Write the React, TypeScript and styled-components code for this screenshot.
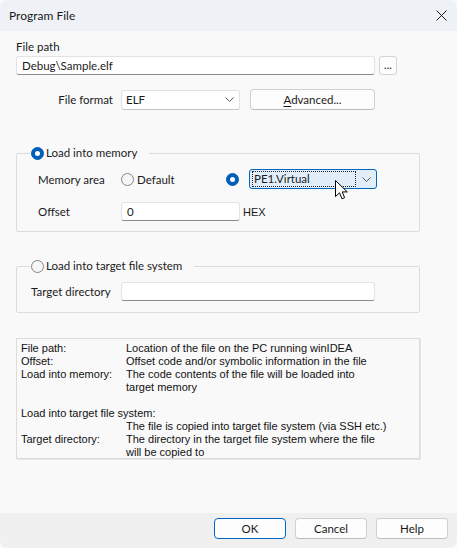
import React from 'react';
import styled, { createGlobalStyle } from 'styled-components';

const Global = createGlobalStyle`
  html, body { margin: 0; padding: 0; background: #f9f9f9; }
  body { font-family: 'Lato', 'Segoe UI', sans-serif; font-size: 11.5px; color: #1b1b1b; }
  * { box-sizing: border-box; }
`;

const Window = styled.div`
  width: 457px;
  height: 548px;
  display: flex;
  flex-direction: column;
  background: #f9f9f9;
  overflow: hidden;
  border-radius: 8px;
`;

const TitleBar = styled.div`
  height: 31px;
  flex: none;
  display: flex;
  align-items: center;
  justify-content: space-between;
  padding: 0 10px 0 9px;
  background: #eef2f6;
  font-size: 12px;
  color: #1a1a1a;
`;

const Body = styled.div`
  flex: 1;
  display: flex;
  flex-direction: column;
  padding: 8px 37px 0 16px;
`;

const TopLabel = styled.div`
  line-height: 16px;
  margin-bottom: 1px;
`;

const Row = styled.div<{ $mt?: number; $pr?: number }>`
  display: flex;
  align-items: center;
  margin-top: ${p => p.$mt ?? 0}px;
  padding-right: ${p => p.$pr ?? 0}px;
`;

const Field = styled.div<{ $w?: number; $h?: number }>`
  ${p => (p.$w ? `width: ${p.$w}px; flex: none;` : 'flex: 1;')}
  height: ${p => p.$h ?? 19}px;
  background: #ffffff;
  border: 1px solid #e3e3e3;
  border-bottom-color: #8a8a8a;
  border-radius: 3px;
  display: flex;
  align-items: center;
  padding: 0 5px;
  line-height: 16px;
`;

const SmallButton = styled.div`
  width: 18px;
  height: 19px;
  margin-left: 4px;
  flex: none;
  background: #fdfdfd;
  border: 1px solid #d3d3d3;
  border-radius: 3px;
  display: flex;
  align-items: center;
  justify-content: center;
  font-size: 11px;
  padding-bottom: 2px;
`;

const RightLabel = styled.div<{ $w: number }>`
  width: ${p => p.$w}px;
  flex: none;
  text-align: right;
`;

const LeftLabel = styled.div<{ $w: number }>`
  width: ${p => p.$w}px;
  flex: none;
`;

const Combo = styled.div<{ $w: number; $ml?: number; $focus?: boolean }>`
  position: relative;
  width: ${p => p.$w}px;
  margin-left: ${p => p.$ml ?? 0}px;
  flex: none;
  height: 20px;
  background: ${p => (p.$focus ? '#e1eefa' : '#ffffff')};
  border: 1px solid ${p => (p.$focus ? '#0067c0' : '#e0e0e0')};
  ${p => (p.$focus ? '' : 'border-bottom-color: #c4c4c4;')}
  border-radius: 3px;
  display: flex;
  align-items: center;
  justify-content: space-between;
  padding: 0 5px 0 2px;
`;

const ComboValue = styled.span<{ $focus?: boolean }>`
  flex: 1;
  height: 16px;
  line-height: 14px;
  padding-left: 1px;
  margin-right: 6px;
  border: 1px dotted ${p => (p.$focus ? '#222' : 'transparent')};
`;

const PushButton = styled.div<{ $w: number; $ml?: number; $default?: boolean }>`
  width: ${p => p.$w}px;
  height: 21px;
  margin-left: ${p => p.$ml ?? 0}px;
  flex: none;
  background: #fdfdfd;
  border: 1px solid ${p => (p.$default ? '#0067c0' : '#d0d0d0')};
  border-bottom-color: ${p => (p.$default ? '#0067c0' : '#bcbcbc')};
  border-radius: 4px;
  display: flex;
  align-items: center;
  justify-content: center;
  color: #1a1a1a;
`;

const Group = styled.fieldset<{ $mt: number }>`
  margin: ${p => p.$mt}px 0 0 0;
  padding: 0;
  min-width: 0;
  border: 1px solid #dcdcdc;
  border-radius: 2px;
`;

const GroupContent = styled.div<{ $pl: number; $pt: number; $pb: number }>`
  padding: ${p => p.$pt}px 0 ${p => p.$pb}px ${p => p.$pl}px;
  display: flex;
  flex-direction: column;
  gap: 13px;
`;

const Legend = styled.legend`
  margin-left: 13px;
  padding: 0 12px 0 1px;
  line-height: 16px;
  display: flex;
  align-items: center;
  gap: 2px;
`;

const RadioWrap = styled.div<{ $w?: number }>`
  display: flex;
  align-items: center;
  gap: 3px;
  ${p => (p.$w ? `width: ${p.$w}px; flex: none;` : '')}
`;

const RadioCircle = styled.span<{ $on?: boolean }>`
  width: 13px;
  height: 13px;
  flex: none;
  border-radius: 50%;
  display: inline-flex;
  align-items: center;
  justify-content: center;
  background: ${p => (p.$on ? '#005fb8' : '#f6f6f6')};
  border: 1px solid ${p => (p.$on ? '#005fb8' : '#858585')};
  &::after {
    content: '';
    display: ${p => (p.$on ? 'block' : 'none')};
    width: 5px;
    height: 5px;
    border-radius: 50%;
    background: #ffffff;
  }
`;

const Suffix = styled.span`
  margin-left: 3px;
  font-family: 'Liberation Sans', Arial, sans-serif;
  font-size: 11px;
`;

const InfoBox = styled.div`
  margin-top: 25px;
  height: 121px;
  border: 1px solid #dcdcdc;
  box-shadow: 1px 1px 0 #e6e6e6;
  padding: 3px 4px 0 4px;
  display: grid;
  grid-template-columns: 105px 1fr;
  grid-auto-rows: 13px;
  font-family: 'Liberation Sans', Tahoma, sans-serif;
  font-size: 11px;
  line-height: 13px;
  color: #111;
  align-content: start;
`;

const InfoCell = styled.div<{ $span?: boolean }>`
  white-space: nowrap;
  ${p => (p.$span ? 'grid-column: 1 / span 2;' : '')}
`;

const Footer = styled.div`
  height: 35px;
  flex: none;
  background: #f0f0f0;
  display: flex;
  justify-content: flex-end;
  gap: 9px;
  padding: 5px 9px 0 0;
`;

const Underline = styled.span`
  text-decoration: underline;
  text-underline-offset: 2px;
`;

const Chevron = () => (
  <svg width="9" height="5" viewBox="0 0 9 5" style={{ flex: 'none' }}>
    <path d="M0.5 0.5 L4.5 4.5 L8.5 0.5" fill="none" stroke="#5a5a5a" strokeWidth="1" />
  </svg>
);

const CursorSvg = styled.svg`
  position: absolute;
  left: 85px;
  top: 10px;
  pointer-events: none;
`;

const Cursor = () => (
  <CursorSvg width="13" height="20" viewBox="0 0 13 20">
    <path
      d="M0.5 0.5 L0.5 16.5 L4.5 12.8 L7 18.8 L9.6 17.7 L7.2 11.9 L12.3 11.9 Z"
      fill="#ffffff"
      stroke="#000000"
      strokeWidth="1"
    />
  </CursorSvg>
);

const CloseIcon = () => (
  <svg width="11" height="11" viewBox="0 0 11 11">
    <path d="M0.5 0.5 L10.5 10.5 M10.5 0.5 L0.5 10.5" stroke="#1a1a1a" strokeWidth="1" />
  </svg>
);

const info: [string, string][] = [
  ['File path:', 'Location of the file on the PC running winIDEA'],
  ['Offset:', 'Offset code and/or symbolic information in the file'],
  ['Load into memory:', 'The code contents of the file will be loaded into'],
  ['', 'target memory'],
  ['', ''],
];

export default function App() {
  return (
    <>
      <Global />
      <Window>
        <TitleBar>
          <span>Program File</span>
          <CloseIcon />
        </TitleBar>
        <Body>
          <TopLabel>File path</TopLabel>
          <Row $pr={23}>
            <Field>Debug\Sample.elf</Field>
            <SmallButton>...</SmallButton>
          </Row>
          <Row $mt={14}>
            <RightLabel $w={97}>File format</RightLabel>
            <Combo $w={119} $ml={8}>
              <ComboValue>ELF</ComboValue>
              <Chevron />
            </Combo>
            <PushButton $w={125} $ml={10}>
              <span>
                <Underline>A</Underline>dvanced...
              </span>
            </PushButton>
          </Row>

          <Group $mt={35}>
            <Legend>
              <RadioCircle $on />
              <span>Load into memory</span>
            </Legend>
            <GroupContent $pl={21} $pt={8} $pb={10}>
              <Row>
                <LeftLabel $w={83}>Memory area</LeftLabel>
                <RadioWrap $w={105}>
                  <RadioCircle />
                  <span>Default</span>
                </RadioWrap>
                <RadioWrap $w={23}>
                  <RadioCircle $on />
                </RadioWrap>
                <Combo $w={128} $focus>
                  <ComboValue $focus>PE1.Virtual</ComboValue>
                  <Chevron />
                  <Cursor />
                </Combo>
              </Row>
              <Row>
                <LeftLabel $w={83}>Offset</LeftLabel>
                <Field $w={119}>0</Field>
                <Suffix>HEX</Suffix>
              </Row>
            </GroupContent>
          </Group>

          <Group $mt={26}>
            <Legend>
              <RadioCircle />
              <span>Load into target file system</span>
            </Legend>
            <GroupContent $pl={14} $pt={8} $pb={11}>
              <Row>
                <LeftLabel $w={90}>Target directory</LeftLabel>
                <Field $w={254} />
              </Row>
            </GroupContent>
          </Group>

          <InfoBox>
            {info.map(([a, b], i) => (
              <React.Fragment key={i}>
                <InfoCell>{a}</InfoCell>
                <InfoCell>{b}</InfoCell>
              </React.Fragment>
            ))}
            <InfoCell $span>Load into target file system:</InfoCell>
            <InfoCell />
            <InfoCell>The file is copied into target file system (via SSH etc.)</InfoCell>
            <InfoCell>Target directory:</InfoCell>
            <InfoCell>The directory in the target file system where the file</InfoCell>
            <InfoCell />
            <InfoCell>will be copied to</InfoCell>
          </InfoBox>
        </Body>
        <Footer>
          <PushButton $w={72} $default>OK</PushButton>
          <PushButton $w={72}>Cancel</PushButton>
          <PushButton $w={72}>Help</PushButton>
        </Footer>
      </Window>
    </>
  );
}
